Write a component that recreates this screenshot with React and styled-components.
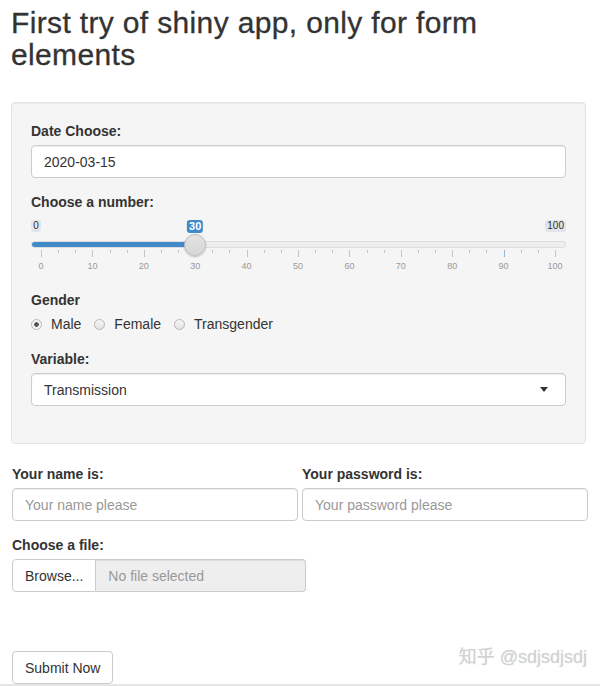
import React from 'react'
import styled, { createGlobalStyle } from 'styled-components'

const GlobalStyle = createGlobalStyle`
  html, body {
    margin: 0;
    padding: 0;
    background: #fff;
  }
  body {
    font-family: "Liberation Sans", Arial, sans-serif;
    font-size: 14px;
    color: #333;
  }
`

const Page = styled.div`
  position: relative;
  width: 600px;
  height: 686px;
  box-sizing: border-box;
  padding: 7px 12px 0 11px;
  overflow: hidden;
`

const Title = styled.h1`
  margin: 0 0 31px;
  font-size: 30px;
  line-height: 32px;
  letter-spacing: 0.35px;
  font-weight: 400;
  color: #333;
  -webkit-text-stroke: 0.3px #333;
`

const Well = styled.div`
  width: 575px;
  box-sizing: border-box;
  background: #f5f5f5;
  border: 1px solid #e3e3e3;
  border-radius: 4px;
  box-shadow: inset 0 1px 1px rgba(0, 0, 0, 0.05);
  padding: 18px 19px 37px;
`

const Group = styled.div`
  margin-bottom: ${p => p.$mb ?? 14}px;
`

const Label = styled.label`
  display: block;
  font-weight: bold;
  line-height: 20px;
  margin-bottom: 4px;
`

const TextInput = styled.div`
  height: 33px;
  box-sizing: border-box;
  border: 1px solid #ccc;
  border-radius: 4px;
  background: ${p => (p.$disabled ? '#eee' : '#fff')};
  box-shadow: inset 0 1px 1px rgba(0, 0, 0, 0.075);
  padding: 0 12px;
  display: flex;
  align-items: center;
  color: ${p => (p.$placeholder ? '#999' : '#333')};
  line-height: 20px;
`

const Select = styled(TextInput)`
  justify-content: space-between;
  padding-right: 17px;
`

const Caret = styled.span`
  width: 0;
  height: 0;
  border-left: 4.5px solid transparent;
  border-right: 4.5px solid transparent;
  border-top: 5px solid #333;
`

/* slider */
const Slider = styled.div`
  position: relative;
  height: 58px;
`

const EdgeTag = styled.span`
  position: absolute;
  top: 4px;
  ${p => (p.$right ? 'right: 0;' : 'left: 0;')}
  height: 12px;
  padding: 0 2px;
  min-width: 6px;
  background: #e1e4e9;
  border-radius: 3px;
  font-size: 10px;
  line-height: 12px;
  color: #333;
  text-align: center;
`

const ValueTag = styled.span`
  position: absolute;
  top: 4px;
  transform: translateX(-50%);
  height: 13px;
  padding: 0 2px;
  background: #428bca;
  border-radius: 3px;
  font-size: 11px;
  font-weight: bold;
  line-height: 13px;
  color: #fff;
`

const Track = styled.div`
  position: absolute;
  top: 25px;
  left: 0;
  right: 0;
  height: 7px;
  box-sizing: border-box;
  background: #eeeeee;
  border: 1px solid #dcdcdc;
  border-radius: 4px;
  overflow: hidden;
`

const Fill = styled.div`
  height: 100%;
  background: #428bca;
  margin: -1px 0 0 -1px;
  padding-bottom: 2px;
`

const Handle = styled.div`
  position: absolute;
  top: 18px;
  width: 22px;
  height: 22px;
  box-sizing: border-box;
  transform: translateX(-50%);
  border-radius: 50%;
  border: 1px solid #bdbdbd;
  background: linear-gradient(#e4e4e4, #d6d6d6);
  box-shadow: 0 1px 2px rgba(0, 0, 0, 0.2);
`

const Tick = styled.span`
  position: absolute;
  top: 34px;
  width: 1px;
  height: ${p => (p.$major ? 7 : 3)}px;
  background: ${p => (p.$hl ? '#8fb7db' : '#c4c4c4')};
`

const TickText = styled.span`
  position: absolute;
  top: 45px;
  transform: translateX(-50%);
  font-size: 9px;
  line-height: 10px;
  color: #999;
`

/* radios */
const RadioRow = styled.div`
  display: flex;
  align-items: center;
  height: 20px;
  gap: 13px;
`

const RadioItem = styled.span`
  display: flex;
  align-items: center;
  gap: 9px;
`

const RadioDot = styled.span`
  width: 11px;
  height: 11px;
  box-sizing: border-box;
  border-radius: 50%;
  border: 1px solid #b8b8b8;
  background: ${p =>
    p.$checked
      ? 'radial-gradient(circle, #555 0 2px, #f4f4f4 2.6px)'
      : 'linear-gradient(#f6f6f6, #e2e2e2)'};
`

/* below the well */
const Lower = styled.div`
  padding-left: 1px;
  margin-top: 20px;
`

const TwoCols = styled.div`
  display: grid;
  grid-template-columns: 1fr 1fr;
  gap: 4px;
`

const FileRow = styled.div`
  display: flex;
  width: 294px;
`

const Button = styled.div`
  height: 33px;
  box-sizing: border-box;
  border: 1px solid #ccc;
  border-radius: ${p => (p.$joined ? '4px 0 0 4px' : '4px')};
  background: #fff;
  padding: 0 12px;
  display: inline-flex;
  align-items: center;
  color: #333;
  flex-shrink: 0;
`

const FileName = styled(TextInput)`
  flex: 1;
  border-left: none;
  border-radius: 0 4px 4px 0;
`

const SubmitWrap = styled.div`
  margin-top: 59px;
`

const BottomLine = styled.div`
  position: absolute;
  left: 0;
  right: 0;
  top: 684px;
  height: 2px;
  background: #e6e6e6;
`

const Watermark = styled.div`
  position: absolute;
  right: 13px;
  top: 646px;
  font-family: "Liberation Sans", "Noto Sans CJK SC", sans-serif;
  font-size: 18px;
  line-height: 22px;
  color: #d2d2d2;
  text-shadow: 0 0 1px rgba(0, 0, 0, 0.12);
`

const GRID_L = 10
const GRID_W = 514

const ticks = Array.from({ length: 31 }, (_, i) => i)

export default function App() {
  const value = 30
  const pos = GRID_L + (value / 100) * GRID_W

  return (
    <Page>
      <GlobalStyle />
      <Title>First try of shiny app, only for form elements</Title>

      <Well>
        <Group>
          <Label>Date Choose:</Label>
          <TextInput>2020-03-15</TextInput>
        </Group>

        <Group $mb={16}>
          <Label>Choose a number:</Label>
          <Slider>
            <EdgeTag>0</EdgeTag>
            <EdgeTag $right>100</EdgeTag>
            <ValueTag style={{ left: pos }}>{value}</ValueTag>
            <Track>
              <Fill style={{ width: pos + 1 }} />
            </Track>
            {ticks.map(i => {
              const x = GRID_L + (i * GRID_W) / 30
              const major = i % 3 === 0
              return (
                <React.Fragment key={i}>
                  <Tick $major={major} $hl={i === 27} style={{ left: Math.round(x) }} />
                  {major && <TickText style={{ left: x }}>{(i / 3) * 10}</TickText>}
                </React.Fragment>
              )
            })}
            <Handle style={{ left: pos }} />
          </Slider>
        </Group>

        <Group $mb={15}>
          <Label>Gender</Label>
          <RadioRow>
            <RadioItem><RadioDot $checked />Male</RadioItem>
            <RadioItem><RadioDot />Female</RadioItem>
            <RadioItem><RadioDot />Transgender</RadioItem>
          </RadioRow>
        </Group>

        <Group $mb={0}>
          <Label>Variable:</Label>
          <Select>
            Transmission
            <Caret />
          </Select>
        </Group>
      </Well>

      <Lower>
        <TwoCols>
          <Group>
            <Label>Your name is:</Label>
            <TextInput $placeholder>Your name please</TextInput>
          </Group>
          <Group>
            <Label>Your password is:</Label>
            <TextInput $placeholder>Your password please</TextInput>
          </Group>
        </TwoCols>

        <Group $mb={0}>
          <Label>Choose a file:</Label>
          <FileRow>
            <Button $joined>Browse...</Button>
            <FileName $disabled $placeholder>No file selected</FileName>
          </FileRow>
        </Group>

        <SubmitWrap>
          <Button>Submit Now</Button>
        </SubmitWrap>
      </Lower>

      <Watermark>知乎 @sdjsdjsdj</Watermark>
      <BottomLine />
    </Page>
  )
}
